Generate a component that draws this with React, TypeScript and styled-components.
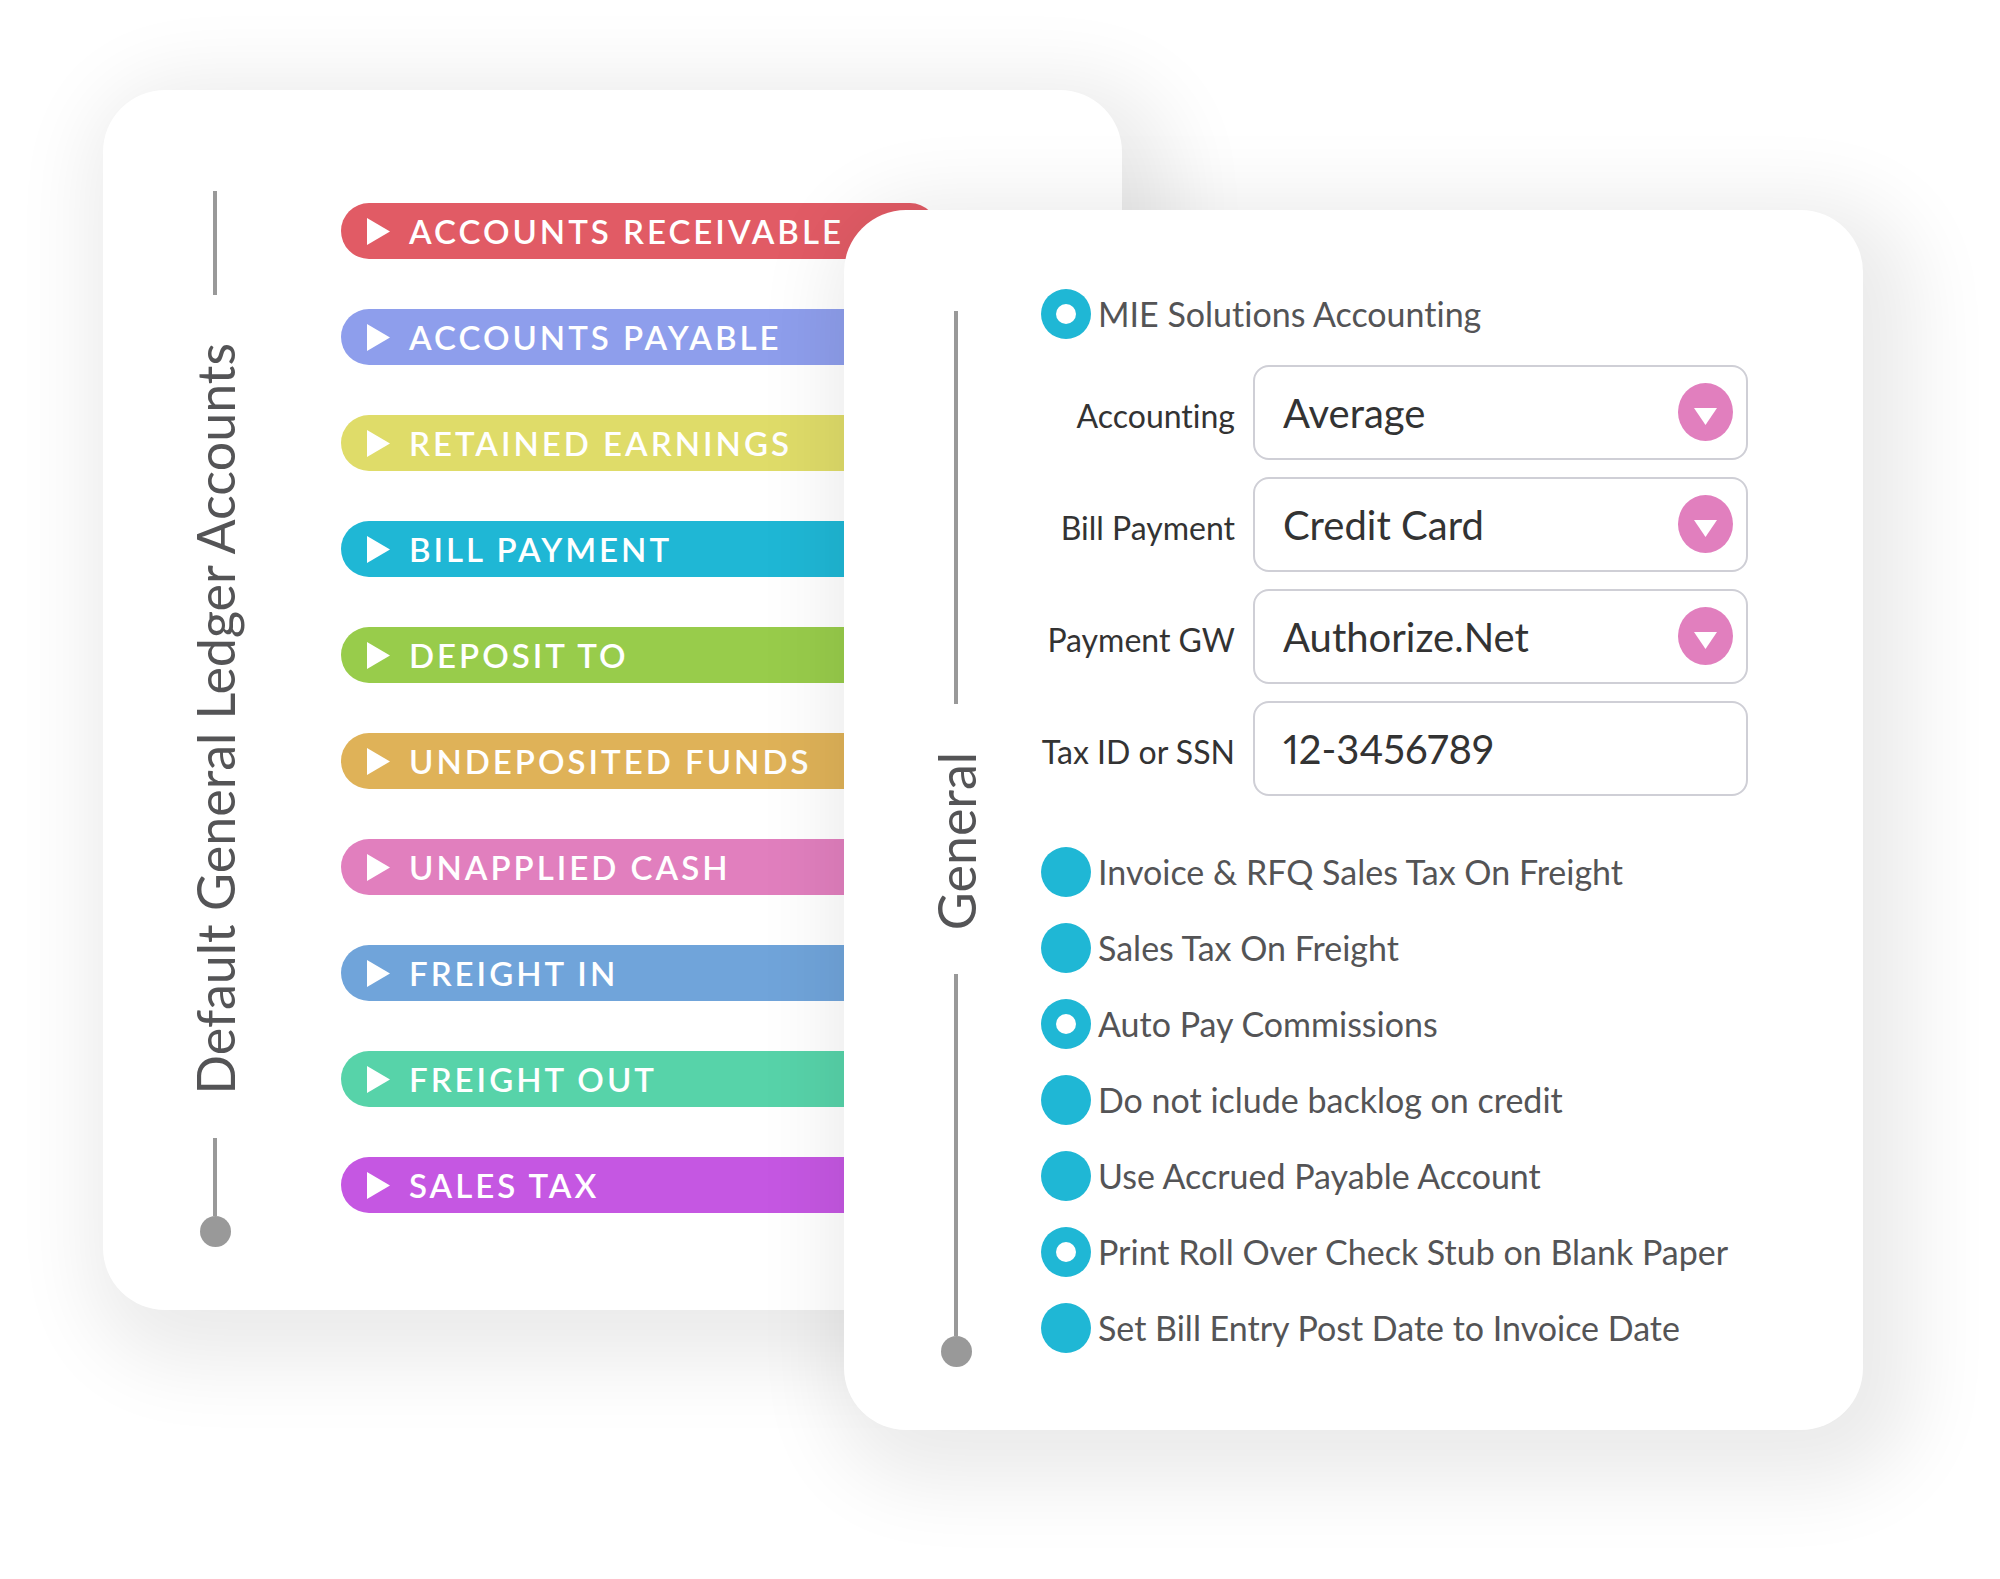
import React, { useId } from "react";
import styled, { createGlobalStyle } from "styled-components";

const GlobalStyle = createGlobalStyle`
  *, *::before, *::after { box-sizing: border-box; }
  body {
    margin: 0;
    background: #fff;
    font-family: Lato, "Open Sans", sans-serif;
    font-variant-ligatures: none;
    color: #545456;
  }
`;

const Stage = styled.main`
  display: grid;
  grid-template-columns: 741fr 278fr 741fr;
  grid-template-rows: 120px auto 120px;
  padding: 90px 137px 149px 103px;
  overflow: hidden;
`;

const Card = styled.section<{ $front?: boolean }>`
  grid-column: ${(p) => (p.$front ? "2 / 4" : "1 / 3")};
  grid-row: ${(p) => (p.$front ? "2 / 4" : "1 / 3")};
  display: flex;
  min-width: 0;
  background: #fff;
  border-radius: 62px;
  box-shadow: 20px 22px 80px 32px rgba(0, 0, 0, 0.084);
`;

const Rail = styled.div`
  display: flex;
  flex-direction: column;
  align-items: center;
  flex: none;
  width: 138px;
  padding: 101px 0 63px 86px;
`;

const RailLine = styled.span<{ $length?: number }>`
  flex: ${(p) => (p.$length ? `0 0 ${p.$length}px` : "1 1 0")};
  width: 4px;
  background: #999;
`;

const RailDot = styled.span`
  width: 31px;
  height: 31px;
  border-radius: 50%;
  background: #999;
`;

const RailTitle = styled.h2`
  margin: 48px 0 44px;
  writing-mode: vertical-rl;
  transform: rotate(180deg);
  font-size: 52px;
  font-weight: 400;
  line-height: 60px;
  white-space: nowrap;
`;

const AccountList = styled.ul`
  flex: 1;
  display: flex;
  flex-direction: column;
  gap: 50px;
  margin: 0;
  padding: 113px 184px 97px 100px;
  list-style: none;
`;

const Pill = styled.button<{ $color: string }>`
  display: flex;
  align-items: center;
  gap: 19px;
  width: 100%;
  height: 56px;
  padding: 0 26px;
  border: 0;
  border-radius: 28px;
  background: ${(p) => p.$color};
  color: #fff;
  font-family: inherit;
  font-size: 33px;
  font-weight: 600;
  letter-spacing: 3px;
  line-height: 56px;
  white-space: nowrap;
  text-transform: uppercase;
  cursor: pointer;

  svg { flex: none; }
`;

const Settings = styled.form`
  flex: 1;
  min-width: 0;
  padding: 79px 115px 77px 59px;
`;

const Fields = styled.div`
  display: grid;
  gap: 17px;
  margin: 26px 0 51px;
`;

const FieldRow = styled.div`
  display: grid;
  grid-template-columns: 194px 1fr;
  align-items: center;
  gap: 18px;
`;

const FieldLabel = styled.label`
  padding-top: 6px;
  font-size: 32px;
  line-height: 40px;
  color: #333;
  text-align: right;
  white-space: nowrap;
`;

const Control = styled.div`
  position: relative;

  select, input {
    display: block;
    width: 100%;
    height: 95px;
    margin: 0;
    padding: 0 28px;
    border: 2px solid #cfcfd6;
    border-radius: 16px;
    background: #fff;
    color: #333;
    font-family: inherit;
    font-size: 40px;
    font-variant-numeric: proportional-nums;
    appearance: none;
  }
`;

const Arrow = styled.svg`
  position: absolute;
  top: 18px;
  right: 15px;
  pointer-events: none;
`;

const Options = styled.div`
  display: grid;
  gap: 26px;
`;

const OptionLabel = styled.label`
  display: flex;
  align-items: center;
  gap: 7px;
  height: 50px;
  font-size: 34px;
  line-height: 50px;
  white-space: nowrap;
`;

const Tick = styled.input`
  appearance: none;
  display: grid;
  place-items: center;
  flex: none;
  width: 50px;
  height: 50px;
  margin: 0;
  border-radius: 50%;
  background: #1fb7d5;

  &:checked::after {
    content: "";
    width: 20px;
    height: 20px;
    border-radius: 50%;
    background: #fff;
  }
`;

const accounts = [
  ["Accounts Receivable", "#e15b65"],
  ["Accounts Payable", "#8e9eec"],
  ["Retained Earnings", "#dfdc69"],
  ["Bill Payment", "#1fb7d5"],
  ["Deposit To", "#98cc4b"],
  ["Undeposited Funds", "#dfb258"],
  ["Unapplied Cash", "#e17fbe"],
  ["Freight In", "#70a4da"],
  ["Freight Out", "#57d3a9"],
  ["Sales Tax", "#c557e2"],
];

const fields = [
  { label: "Accounting", value: "Average", select: true },
  { label: "Bill Payment", value: "Credit Card", select: true },
  { label: "Payment GW", value: "Authorize.Net", select: true },
  { label: "Tax ID or SSN", value: "12-3456789", select: false },
];

const options = [
  { label: "Invoice & RFQ Sales Tax On Freight", on: false },
  { label: "Sales Tax On Freight", on: false },
  { label: "Auto Pay Commissions", on: true },
  { label: "Do not iclude backlog on credit", on: false },
  { label: "Use Accrued Payable Account", on: false },
  { label: "Print Roll Over Check Stub on Blank Paper", on: true },
  { label: "Set Bill Entry Post Date to Invoice Date", on: false },
];

function SideRail({ title, length }: { title: string; length: number }) {
  return (
    <Rail>
      <RailLine $length={length} />
      <RailTitle>{title}</RailTitle>
      <RailLine />
      <RailDot />
    </Rail>
  );
}

function Option({ label, on }: { label: string; on: boolean }) {
  return (
    <OptionLabel>
      <Tick type="checkbox" defaultChecked={on} />
      {label}
    </OptionLabel>
  );
}

function Field({ label, value, select }: { label: string; value: string; select: boolean }) {
  const id = useId();
  return (
    <FieldRow>
      <FieldLabel htmlFor={id}>{label}</FieldLabel>
      <Control>
        {select ? (
          <>
            <select id={id} defaultValue={value}>
              <option>{value}</option>
            </select>
            <Arrow width="55" height="58" viewBox="0 0 55 58" aria-hidden="true">
              <ellipse cx="27.5" cy="29" rx="27.5" ry="29" fill="#e17fbe" />
              <path d="M16 25H39L27.5 42Z" fill="#fff" />
            </Arrow>
          </>
        ) : (
          <input id={id} type="text" defaultValue={value} />
        )}
      </Control>
    </FieldRow>
  );
}

export default function App() {
  return (
    <>
      <GlobalStyle />
      <Stage>
        <Card>
          <SideRail title="Default General Ledger Accounts" length={104} />
          <AccountList>
            {accounts.map(([name, color]) => (
              <li key={name}>
                <Pill type="button" $color={color}>
                  <svg width="23" height="27" viewBox="0 0 23 27" aria-hidden="true">
                    <path d="M0 0L23 13.5L0 27Z" fill="#fff" />
                  </svg>
                  {name}
                </Pill>
              </li>
            ))}
          </AccountList>
        </Card>
        <Card $front>
          <SideRail title="General" length={393} />
          <Settings>
            <Option label="MIE Solutions Accounting" on />
            <Fields>
              {fields.map((f) => (
                <Field key={f.label} {...f} />
              ))}
            </Fields>
            <Options>
              {options.map((o) => (
                <Option key={o.label} {...o} />
              ))}
            </Options>
          </Settings>
        </Card>
      </Stage>
    </>
  );
}
